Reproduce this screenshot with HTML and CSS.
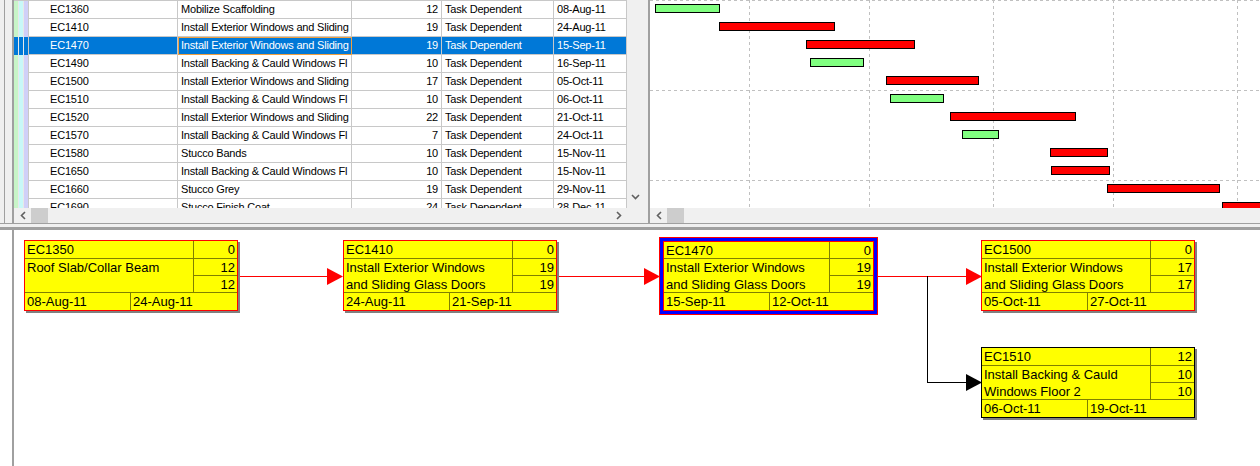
FILE: index.html
```html
<!DOCTYPE html>
<html>
<head>
<meta charset="utf-8">
<title>Schedule</title>
<link rel="stylesheet" href="styles.css">
</head>
<body>
<div class="app">
  <div class="top">
    <div class="edge"><div class="edge-a"></div><div class="edge-b"></div></div>
    <div class="tablepane">
      <div class="tbody">
        <div class="grid">
          <div class="row"><div class="ind"><i class="g"></i><i class="c"></i><i class="l"></i></div><div class="cell c1">EC1360</div><div class="cell c2">Mobilize Scaffolding</div><div class="cell c3">12</div><div class="cell c4">Task Dependent</div><div class="cell c5">08-Aug-11</div></div>
          <div class="row"><div class="ind"><i class="g"></i><i class="c"></i><i class="l"></i></div><div class="cell c1">EC1410</div><div class="cell c2">Install Exterior Windows and Sliding</div><div class="cell c3">19</div><div class="cell c4">Task Dependent</div><div class="cell c5">24-Aug-11</div></div>
          <div class="row sel"><div class="ind"><i class="g"></i><i class="c"></i><i class="l"></i></div><div class="cell c1">EC1470</div><div class="cell c2 focus">Install Exterior Windows and Sliding</div><div class="cell c3">19</div><div class="cell c4">Task Dependent</div><div class="cell c5">15-Sep-11</div></div>
          <div class="row"><div class="ind"><i class="g"></i><i class="c"></i><i class="l"></i></div><div class="cell c1">EC1490</div><div class="cell c2">Install Backing &amp; Cauld Windows Fl</div><div class="cell c3">10</div><div class="cell c4">Task Dependent</div><div class="cell c5">16-Sep-11</div></div>
          <div class="row"><div class="ind"><i class="g"></i><i class="c"></i><i class="l"></i></div><div class="cell c1">EC1500</div><div class="cell c2">Install Exterior Windows and Sliding</div><div class="cell c3">17</div><div class="cell c4">Task Dependent</div><div class="cell c5">05-Oct-11</div></div>
          <div class="row"><div class="ind"><i class="g"></i><i class="c"></i><i class="l"></i></div><div class="cell c1">EC1510</div><div class="cell c2">Install Backing &amp; Cauld Windows Fl</div><div class="cell c3">10</div><div class="cell c4">Task Dependent</div><div class="cell c5">06-Oct-11</div></div>
          <div class="row"><div class="ind"><i class="g"></i><i class="c"></i><i class="l"></i></div><div class="cell c1">EC1520</div><div class="cell c2">Install Exterior Windows and Sliding</div><div class="cell c3">22</div><div class="cell c4">Task Dependent</div><div class="cell c5">21-Oct-11</div></div>
          <div class="row"><div class="ind"><i class="g"></i><i class="c"></i><i class="l"></i></div><div class="cell c1">EC1570</div><div class="cell c2">Install Backing &amp; Cauld Windows Fl</div><div class="cell c3">7</div><div class="cell c4">Task Dependent</div><div class="cell c5">24-Oct-11</div></div>
          <div class="row"><div class="ind"><i class="g"></i><i class="c"></i><i class="l"></i></div><div class="cell c1">EC1580</div><div class="cell c2">Stucco Bands</div><div class="cell c3">10</div><div class="cell c4">Task Dependent</div><div class="cell c5">15-Nov-11</div></div>
          <div class="row"><div class="ind"><i class="g"></i><i class="c"></i><i class="l"></i></div><div class="cell c1">EC1650</div><div class="cell c2">Install Backing &amp; Cauld Windows Fl</div><div class="cell c3">10</div><div class="cell c4">Task Dependent</div><div class="cell c5">15-Nov-11</div></div>
          <div class="row"><div class="ind"><i class="g"></i><i class="c"></i><i class="l"></i></div><div class="cell c1">EC1660</div><div class="cell c2">Stucco Grey</div><div class="cell c3">19</div><div class="cell c4">Task Dependent</div><div class="cell c5">29-Nov-11</div></div>
          <div class="row"><div class="ind"><i class="g"></i><i class="c"></i><i class="l"></i></div><div class="cell c1">EC1690</div><div class="cell c2">Stucco Finish Coat</div><div class="cell c3">24</div><div class="cell c4">Task Dependent</div><div class="cell c5">28-Dec-11</div></div>
        </div>
        <div class="vscroll">
          <svg class="chev" width="9" height="6" viewBox="0 0 9 6"><polyline points="1,1 4.5,4.5 8,1" fill="none" stroke="#606060" stroke-width="1.6"/></svg>
        </div>
      </div>
      <div class="hscroll">
        <div class="sbtn"><svg width="6" height="9" viewBox="0 0 6 9"><polyline points="5,1 1.5,4.5 5,8" fill="none" stroke="#606060" stroke-width="1.6"/></svg></div>
        <div class="thumb"></div>
        <div class="track"></div>
        <div class="sbtn"><svg width="6" height="9" viewBox="0 0 6 9"><polyline points="1,1 4.5,4.5 1,8" fill="none" stroke="#606060" stroke-width="1.6"/></svg></div>
        <div class="corner"></div>
      </div>
    </div>
    <div class="splitter"></div>
    <div class="ganttpane">
      <svg class="gantt" width="610" height="208" viewBox="0 0 610 208" shape-rendering="crispEdges">
        <g stroke="#c0c0c0" stroke-width="1" stroke-dasharray="3 3">
          <line x1="99.5" y1="0" x2="99.5" y2="208"/>
          <line x1="219.5" y1="0" x2="219.5" y2="208"/>
          <line x1="343.5" y1="0" x2="343.5" y2="208"/>
          <line x1="463.5" y1="0" x2="463.5" y2="208"/>
          <line x1="587.5" y1="0" x2="587.5" y2="208"/>
          <line x1="0" y1="0.5" x2="610" y2="0.5"/>
          <line x1="0" y1="90.5" x2="610" y2="90.5"/>
          <line x1="0" y1="180.5" x2="610" y2="180.5"/>
        </g>
        <g stroke="#000" stroke-width="1">
          <rect x="5.5" y="4.5" width="64" height="8" fill="#80ff80"/>
          <rect x="69.5" y="22.5" width="115" height="8" fill="#ff0000"/>
          <rect x="156.5" y="40.5" width="108" height="8" fill="#ff0000"/>
          <rect x="160.5" y="58.5" width="53" height="8" fill="#80ff80"/>
          <rect x="236.5" y="76.5" width="92" height="8" fill="#ff0000"/>
          <rect x="240.5" y="94.5" width="53" height="8" fill="#80ff80"/>
          <rect x="300.5" y="112.5" width="125" height="8" fill="#ff0000"/>
          <rect x="312.5" y="130.5" width="36" height="8" fill="#80ff80"/>
          <rect x="400.5" y="148.5" width="57" height="8" fill="#ff0000"/>
          <rect x="401.5" y="166.5" width="58" height="8" fill="#ff0000"/>
          <rect x="457.5" y="184.5" width="112" height="8" fill="#ff0000"/>
          <rect x="572.5" y="202.5" width="60" height="8" fill="#ff0000"/>
        </g>
      </svg>
      <div class="hscroll">
        <div class="sbtn"><svg width="6" height="9" viewBox="0 0 6 9"><polyline points="5,1 1.5,4.5 5,8" fill="none" stroke="#606060" stroke-width="1.6"/></svg></div>
        <div class="thumb"></div>
        <div class="track"></div>
      </div>
    </div>
  </div>
  <div class="divider"></div>
  <div class="bottom">
    <div class="edge2"></div>
    <div class="canvas">
      <svg class="links" width="1246" height="236" viewBox="0 0 1246 236" shape-rendering="crispEdges">
        <g stroke="#ff0000" stroke-width="1">
          <line x1="223" y1="46.5" x2="318" y2="46.5"/>
          <line x1="543" y1="46.5" x2="636" y2="46.5"/>
          <line x1="863" y1="46.5" x2="956" y2="46.5"/>
        </g>
        <g fill="#ff0000" shape-rendering="auto">
          <polygon points="313,38 329,46.5 313,55"/>
          <polygon points="630,38 646,46.5 630,55"/>
          <polygon points="952,38 968,46.5 952,55"/>
        </g>
        <polyline points="913.5,46 913.5,152.5 956,152.5" fill="none" stroke="#000" stroke-width="1"/>
        <polygon points="952,144 968,152.5 952,161" fill="#000" shape-rendering="auto"/>
      </svg>

      <div class="node n1">
        <div class="nid">EC1350</div><div class="nv">0</div>
        <div class="nname">Roof Slab/Collar Beam</div><div class="nv">12</div><div class="nv">12</div>
        <div class="ndates"><span class="d1">08-Aug-11</span><span class="d2">24-Aug-11</span></div>
      </div>

      <div class="node n2">
        <div class="nid">EC1410</div><div class="nv">0</div>
        <div class="nname">Install Exterior Windows<br>and Sliding Glass Doors</div><div class="nv">19</div><div class="nv">19</div>
        <div class="ndates"><span class="d1">24-Aug-11</span><span class="d2">21-Sep-11</span></div>
      </div>

      <div class="selring n3">
        <div class="node inner">
          <div class="nid">EC1470</div><div class="nv">0</div>
          <div class="nname">Install Exterior Windows<br>and Sliding Glass Doors</div><div class="nv">19</div><div class="nv">19</div>
          <div class="ndates"><span class="d1">15-Sep-11</span><span class="d2">12-Oct-11</span></div>
        </div>
      </div>

      <div class="node n4">
        <div class="nid">EC1500</div><div class="nv">0</div>
        <div class="nname">Install Exterior Windows<br>and Sliding Glass Doors</div><div class="nv">17</div><div class="nv">17</div>
        <div class="ndates"><span class="d1">05-Oct-11</span><span class="d2">27-Oct-11</span></div>
      </div>

      <div class="node n5 noncrit">
        <div class="nid">EC1510</div><div class="nv">12</div>
        <div class="nname">Install Backing &amp; Cauld<br>Windows Floor 2</div><div class="nv">10</div><div class="nv">10</div>
        <div class="ndates"><span class="d1">06-Oct-11</span><span class="d2">19-Oct-11</span></div>
      </div>
    </div>
  </div>
</div>
</body>
</html>
```

FILE: styles.css
```css
* { box-sizing: border-box; margin: 0; padding: 0; }
html, body { width: 1260px; height: 466px; overflow: hidden; background: #ffffff; }
body { font-family: "Liberation Sans", Arial, sans-serif; color: #000; }

.app { display: flex; flex-direction: column; width: 1260px; height: 466px; }

/* ---------- top half ---------- */
.top { display: flex; height: 223px; flex: none; }

.edge { width: 14px; display: flex; flex: none; }
.edge-a { width: 5px; background: #f0f0f0; border-right: 1px solid #a0a0a0; }
.edge-b { flex: 1; background: #f0f0f0; border-right: 2px solid #a0a0a0; }

.tablepane { width: 630px; flex: none; display: flex; flex-direction: column; }
.tbody { display: flex; height: 208px; flex: none; }
.grid { width: 613px; flex: none; border-top: 1px solid #c8c8c8; overflow: hidden; }

.row { display: flex; height: 18px; }
.ind { width: 14px; flex: none; display: flex; }
.ind i { display: block; height: 18px; }
.ind .g { width: 5px; background: #c8f5c8; border-right: 1px solid #e8e8e8; }
.ind .c { width: 5px; background: #c8f8f8; border-right: 1px solid #e8e8e8; }
.ind .l { width: 4px; background: #d0d0f8; }

.cell {
  height: 18px;
  line-height: 17px;
  font-size: 11px;
  letter-spacing: -0.2px;
  white-space: nowrap;
  overflow: hidden;
  border-right: 1px solid #c8c8c8;
  border-bottom: 1px solid #c8c8c8;
  flex: none;
}
.c1 { width: 150px; border-left: 1px solid #c8c8c8; padding-left: 21px; }
.c2 { width: 174px; padding-left: 3px; }
.c3 { width: 90px; text-align: right; padding-right: 3px; }
.c4 { width: 112px; padding-left: 3px; }
.c5 { width: 73px; padding-left: 3px; }

.row.sel .cell { background: #0078d7; color: #fff; }
.row.sel .ind i { background: #0078d7; }
.cell.focus { outline: 1px solid #f0a040; outline-offset: -1px; }

.vscroll {
  width: 17px; flex: none; background: #f0f0f0;
  display: flex; flex-direction: column; justify-content: flex-end; align-items: center;
  padding-bottom: 8px;
}
.chev { display: block; }

.hscroll { height: 15px; flex: none; display: flex; background: #f0f0f0; }
.sbtn { width: 17px; flex: none; display: flex; align-items: center; justify-content: center; }
.thumb { width: 17px; flex: none; background: #cdcdcd; }
.track { flex: 1; }
.corner { width: 17px; flex: none; }

.splitter { width: 6px; flex: none; background: #f0f0f0; border-right: 2px solid #a0a0a0; }

.ganttpane { width: 610px; flex: none; display: flex; flex-direction: column; }
.gantt { display: block; height: 208px; background: #fff; }

/* ---------- divider ---------- */
.divider { height: 7px; flex: none; background: #f0f0f0; border-top: 1px solid #a0a0a0; border-bottom: 3px solid #a0a0a0; }

/* ---------- network diagram ---------- */
.bottom { flex: 1; display: flex; }
.edge2 { width: 14px; flex: none; border-right: 2px solid #a0a0a0; background: #fff; }
.canvas { flex: 1; position: relative; background: #fff; }
.links { position: absolute; left: 0; top: 0; }

.node {
  position: absolute;
  width: 214px;
  height: 71px;
  background: #ffff00;
  border: 1px solid #ff0000;
  box-shadow: 2px 2px 0 #808080;
  display: grid;
  grid-template-columns: 1fr 43px;
  grid-template-rows: 18px 17px 17px 17px;
  font-size: 13px;
  line-height: 17px;
}
.node.noncrit { border-color: #000; }
.nid { border-right: 1px solid #808000; border-bottom: 1px solid #808000; padding-left: 2px; }
.nv { border-bottom: 1px solid #808000; text-align: right; padding-right: 2px; }
.nname { grid-row: span 2; border-right: 1px solid #808000; border-bottom: 1px solid #808000; padding-left: 2px; }
.ndates { grid-column: 1 / 3; display: flex; }
.ndates .d1 { width: 106px; border-right: 1px solid #808000; padding-left: 2px; }
.ndates .d2 { flex: 1; padding-left: 2px; }

.n1 { left: 10px; top: 10px; }
.n2 { left: 329px; top: 10px; }
.n4 { left: 967px; top: 10px; }
.n5 { left: 967px; top: 117px; }

.selring {
  position: absolute;
  left: 645px; top: 7px;
  width: 219px; height: 78px;
  border: 1px solid #ff0000;
  background: #0000ff;
  padding: 3px;
}
.selring .inner {
  position: static;
  width: 211px; height: 70px;
  box-shadow: none;
  grid-template-rows: 17px 17px 17px 17px;
}
```
